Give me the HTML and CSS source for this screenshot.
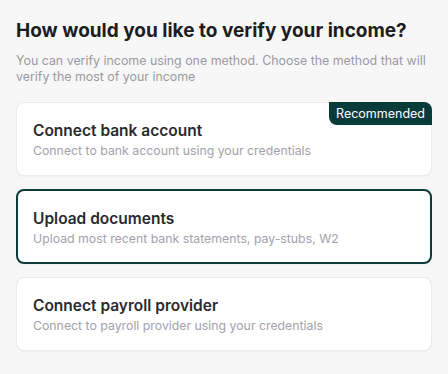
FILE: index.html
```html
<!DOCTYPE html>
<html lang="en">

<head>
    <meta charset="UTF-8">
    <meta name="viewport" content="width=device-width, initial-scale=1.0">
    <title>Verify income</title>
    <link rel="stylesheet" href="styles.css">
</head>

<body>

    <div id="verify-container">
        <h1>How would you like to verify your income?</h1>

        <p class="intro">You can verify income using one method. Choose the method that will verify the most of your income</p>

        <div class="method">
            <span class="badge">Recommended</span>
            <h2>Connect bank account</h2>
            <p>Connect to bank account using your credentials</p>
        </div>

        <div class="method selected">
            <h2>Upload documents</h2>
            <p>Upload most recent bank statements, pay-stubs, W2</p>
        </div>

        <div class="method">
            <h2>Connect payroll provider</h2>
            <p>Connect to payroll provider using your credentials</p>
        </div>
    </div>

</body>

</html>
```

FILE: styles.css
```css
body {
    font-family: 'Inter', 'Noto Sans', sans-serif;
    margin: 0;
    background-color: #f8f7f7;
}

#verify-container {
    padding: 18px 16px 16px 16px;
}

h1 {
    margin: 0;
    font-size: 19px;
    line-height: 26px;
    font-weight: 700;
    color: #1c1c21;
}

.intro {
    margin: 9px 0 17px 0;
    font-size: 12.4px;
    line-height: 16px;
    color: #9a99a2;
}

.method {
    position: relative;
    background-color: #fff;
    border: 1px solid #eceaea;
    border-radius: 8px;
    padding: 18px 16px 16px 16px;
    margin-bottom: 13px;
    box-shadow: 0 1px 2px rgba(0, 0, 0, 0.04);
}

.method.selected {
    border: 2px solid #0d3b3c;
    padding: 18px 15px 15px 15px;
}

.method h2 {
    margin: 0;
    font-size: 15.5px;
    line-height: 20px;
    font-weight: 600;
    color: #2a292e;
}

.method p {
    margin: 2px 0 0 0;
    font-size: 12.3px;
    line-height: 16px;
    color: #a3a2ab;
}

.badge {
    position: absolute;
    top: -1px;
    right: -1px;
    background-color: #0a3b3b;
    color: #fff;
    font-size: 12.5px;
    line-height: 23px;
    padding: 0 7px;
    border-radius: 0 8px 0 8px;
}
```
